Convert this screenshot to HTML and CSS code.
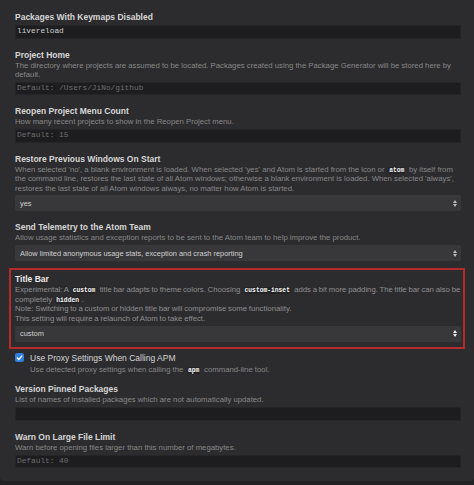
FILE: index.html
```html
<!DOCTYPE html>
<html>
<head>
<meta charset="utf-8">
<link rel="stylesheet" href="styles.css">
</head>
<body>
<div class="panel">
  <div class="setting first">
    <div class="title">Packages With Keymaps Disabled</div>
    <div class="input">livereload</div>
  </div>
  <div class="setting">
    <div class="title">Project Home</div>
    <div class="desc">The directory where projects are assumed to be located. Packages created using the Package Generator will be stored here by default.</div>
    <div class="input placeholder">Default: /Users/JiNo/github</div>
  </div>
  <div class="setting">
    <div class="title">Reopen Project Menu Count</div>
    <div class="desc">How many recent projects to show in the Reopen Project menu.</div>
    <div class="input placeholder">Default: 15</div>
  </div>
  <div class="setting">
    <div class="title">Restore Previous Windows On Start</div>
    <div class="desc"><span>When selected 'no', a blank environment is loaded. When selected 'yes' and Atom is started from the icon or</span> <code>atom</code> <span>by itself from</span> <span>the command line, restores the last state of all Atom windows; otherwise a blank environment is loaded. When selected 'always', restores the last state of all Atom windows always, no matter how Atom is started.</span></div>
    <div class="select"><span>yes</span><svg class="arrows" width="4" height="7" viewBox="0 0 4 7"><path d="M0 3 L2 0 L4 3 Z M0 4 L2 7 L4 4 Z" fill="#bbb"/></svg></div>
  </div>
  <div class="setting">
    <div class="title">Send Telemetry to the Atom Team</div>
    <div class="desc">Allow usage statistics and exception reports to be sent to the Atom team to help improve the product.</div>
    <div class="select"><span>Allow limited anonymous usage stats, exception and crash reporting</span><svg class="arrows" width="4" height="7" viewBox="0 0 4 7"><path d="M0 3 L2 0 L4 3 Z M0 4 L2 7 L4 4 Z" fill="#bbb"/></svg></div>
  </div>
  <div class="setting highlight">
    <div class="title bright">Title Bar</div>
    <div class="desc"><span>Experimental: A</span> <code>custom</code> <span>title bar adapts to theme colors. Choosing</span> <code>custom-inset</code> <span>adds a bit more padding. The title bar can also</span> <span>be completely</span> <code>hidden</code><span>.</span><br>Note: Switching to a custom or hidden title bar will compromise some functionality.<br>This setting will require a relaunch of Atom to take effect.</div>
    <div class="select"><span>custom</span><svg class="arrows" width="4" height="7" viewBox="0 0 4 7"><path d="M0 3 L2 0 L4 3 Z M0 4 L2 7 L4 4 Z" fill="#eee"/></svg></div>
  </div>
  <div class="setting check-setting">
    <div class="check-row">
      <span class="checkbox"><svg width="9" height="9" viewBox="0 0 9 9"><path d="M2 4.6 L3.8 6.4 L7.2 2.6" fill="none" stroke="#fff" stroke-width="1.4"/></svg></span>
      <span class="check-label">Use Proxy Settings When Calling APM</span>
    </div>
    <div class="desc indent">Use detected proxy settings when calling the <code>apm</code> command-line tool.</div>
  </div>
  <div class="setting after-check">
    <div class="title">Version Pinned Packages</div>
    <div class="desc">List of names of installed packages which are not automatically updated.</div>
    <div class="input"></div>
  </div>
  <div class="setting">
    <div class="title">Warn On Large File Limit</div>
    <div class="desc">Warn before opening files larger than this number of megabytes.</div>
    <div class="input placeholder">Default: 40</div>
  </div>
</div>
</body>
</html>
```
FILE: styles.css
```css
html, body {
  margin: 0;
  padding: 0;
  background: #222224;
}
body {
  width: 474px;
  height: 485px;
  overflow: hidden;
  font-family: "Liberation Sans", Arial, sans-serif;
}
.panel {
  background: #2c2c2e;
  height: 481px;
  border-radius: 0 0 4px 4px;
  padding: 11px 11px 0 9px;
  box-sizing: border-box;
}
.setting {
  padding: 0 2px 0 6px;
  margin-top: 10px;
}
.setting.first {
  margin-top: 0;
}
.title {
  font-size: 8.5px;
  font-weight: bold;
  line-height: 12px;
  color: #d6d6d6;
}
.title.bright {
  color: #e8e8e8;
}
.desc {
  font-size: 7.75px;
  line-height: 9.4px;
  color: #878787;
}
.input {
  margin-top: 2px;
  height: 13.5px;
  background: #1d1d1f;
  border: 1px solid #252527;
  box-sizing: border-box;
  font-family: "Liberation Mono", monospace;
  font-size: 7.8px;
  line-height: 11.5px;
  padding: 0 1px;
  color: #cfcfcf;
}
.input.placeholder {
  color: #6e6e6e;
}
.setting .desc + .input {
  margin-top: 2.5px;
}
.select {
  margin-top: 2.5px;
  height: 16px;
  background: #38383a;
  border-radius: 2px;
  display: flex;
  align-items: center;
  justify-content: space-between;
  padding: 0 4px 0 5px;
  font-size: 7.4px;
  color: #d0d0d0;
}
.arrows {
  display: block;
}
code {
  font-family: "Liberation Mono", monospace;
  font-weight: bold;
  font-size: 6.3px;
  line-height: 0;
  color: #f4f4f4;
  background: #242426;
  padding: 0 1px;
  margin: 0 1.5px;
  border-radius: 2px;
}
.highlight {
  margin-top: 7px;
  margin-left: 0;
  margin-right: -2px;
  border: 2px solid #b32b2b;
  padding: 3px 2px 5px 4px;
}
.highlight .desc {
  color: #8e8e8e;
  word-spacing: -0.4px;
}
.highlight .select {
  margin-top: 3px;
}
.check-setting {
  margin-top: 4px;
}
.check-row {
  display: flex;
  align-items: center;
  gap: 6px;
  height: 10px;
}
.checkbox {
  width: 9px;
  height: 9px;
  background: #2f7fe0;
  border-radius: 2px;
  display: block;
}
.checkbox svg {
  display: block;
}
.check-label {
  font-size: 8.5px;
  color: #d6d6d6;
}
.indent {
  padding-left: 15px;
  margin-top: 2px;
}
.setting.after-check {
  margin-top: 9px;
}
```
